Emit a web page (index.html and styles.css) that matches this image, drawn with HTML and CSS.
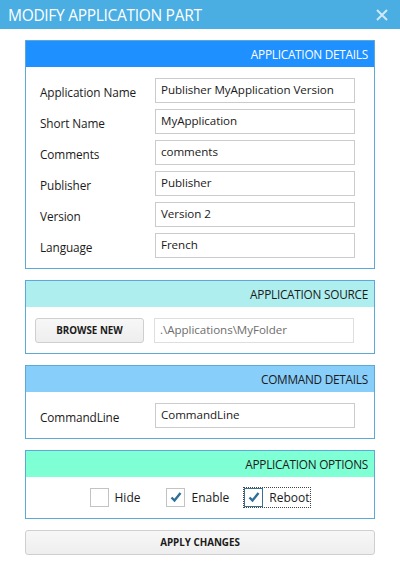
FILE: index.html
```html
<!DOCTYPE html>
<html>
<head>
<meta charset="utf-8">
<link rel="stylesheet" href="styles.css">
</head>
<body>
<div class="titlebar">
  <span class="title">MODIFY APPLICATION PART</span>
  <svg class="close" width="12" height="12" viewBox="0 0 12 12"><path d="M1 1L11 11M11 1L1 11" stroke="#cfe8f7" stroke-width="2" fill="none"/></svg>
</div>
<div class="content">
  <section class="group">
    <div class="ghead h-details">APPLICATION DETAILS</div>
    <div class="gbody form">
      <label>Application Name</label><div class="input">Publisher MyApplication Version</div>
      <label>Short Name</label><div class="input">MyApplication</div>
      <label>Comments</label><div class="input">comments</div>
      <label>Publisher</label><div class="input">Publisher</div>
      <label>Version</label><div class="input">Version 2</div>
      <label>Language</label><div class="input">French</div>
    </div>
  </section>
  <section class="group">
    <div class="ghead h-source">APPLICATION SOURCE</div>
    <div class="gbody row">
      <div class="btn browse">BROWSE NEW</div>
      <div class="input disabled">.\Applications\MyFolder</div>
    </div>
  </section>
  <section class="group">
    <div class="ghead h-command">COMMAND DETAILS</div>
    <div class="gbody form">
      <label>CommandLine</label><div class="input">CommandLine</div>
    </div>
  </section>
  <section class="group">
    <div class="ghead h-options">APPLICATION OPTIONS</div>
    <div class="gbody checks">
      <div class="check c-hide"><span class="box"></span><span class="ctext">Hide</span></div>
      <div class="check c-enable"><span class="box"><svg width="14" height="14" viewBox="0 0 14 14"><path d="M2.5 7.5L5.5 10.5L11.5 3" stroke="#2f6f98" stroke-width="2.4" fill="none"/></svg></span><span class="ctext">Enable</span></div>
      <div class="check focus"><span class="box dark"><svg width="14" height="14" viewBox="0 0 14 14"><path d="M2.5 7.5L5.5 10.5L11.5 3" stroke="#2f6f98" stroke-width="2.4" fill="none"/></svg></span><span class="ctext">Reboot</span></div>
    </div>
  </section>
  <div class="btn apply">APPLY CHANGES</div>
</div>
</body>
</html>
```
FILE: styles.css
```css
html, body {
  margin: 0;
  padding: 0;
  background: #ffffff;
  font-family: "Open Sans", "Noto Sans", sans-serif;
  color: #1a1a1a;
}
.titlebar {
  height: 29px;
  background: #4aaee3;
  display: flex;
  align-items: center;
  justify-content: space-between;
  padding: 0 12px 0 8px;
}
.title {
  color: #ffffff;
  font-size: 15.5px;
  letter-spacing: -0.3px;
}
.content {
  padding: 11px 25px 0 25px;
}
.group {
  border: 1px solid #5ca9d6;
  margin-bottom: 11px;
}
.ghead {
  height: 26px;
  line-height: 26px;
  text-align: right;
  padding-right: 6px;
  font-size: 11.8px;
  letter-spacing: -0.25px;
  color: #1a1a1a;
}
.h-details { background: #1e90ff; color: #fff; }
.h-source { background: #afeeee; }
.h-command { background: #87cefa; }
.h-options { background: #7fffd4; }
.gbody {
  padding: 11px 19px 10px 14px;
}
.form {
  display: grid;
  grid-template-columns: 115px 200px;
  row-gap: 6px;
  align-items: center;
}
.form label {
  font-size: 11.8px;
  letter-spacing: -0.1px;
  padding-top: 2px;
}
.input {
  height: 23px;
  border: 1px solid #cbcbcb;
  font-size: 11.6px;
  line-height: 22px;
  padding-left: 5px;
  letter-spacing: -0.05px;
  box-sizing: content-box;
  width: 193px;
  white-space: nowrap;
  overflow: hidden;
}
.input.disabled {
  color: #6e6e6e;
  border-color: #dedede;
}
.row {
  display: flex;
  align-items: center;
  padding-left: 9px;
  gap: 10px;
}
.btn {
  border: 1px solid #cfcfcf;
  border-radius: 3px;
  background: linear-gradient(#f7f7f7, #eeeeee);
  font-size: 9.8px;
  font-weight: bold;
  color: #1a1a1a;
  text-align: center;
}
.browse {
  width: 107px;
  height: 23px;
  line-height: 23px;
}
.apply {
  height: 23px;
  line-height: 23px;
}
.checks {
  display: flex;
  justify-content: center;
  align-items: center;
  padding: 9px 0 10px 0;
  height: 22px;
}
.check {
  display: flex;
  align-items: center;
  font-size: 12px;
}
.c-hide { margin-right: 25px; }
.c-enable { margin-right: 14px; }
.box {
  width: 17px;
  height: 17px;
  border: 1px solid #c3c3c3;
  display: flex;
  align-items: center;
  justify-content: center;
  background: #fff;
}
.box.dark { border-color: #3d6f8f; }
.ctext {
  margin-left: 5px;
  padding: 0 1px;
}
.focus {
  outline: 1px dotted #444;
  outline-offset: 0;
}
```
